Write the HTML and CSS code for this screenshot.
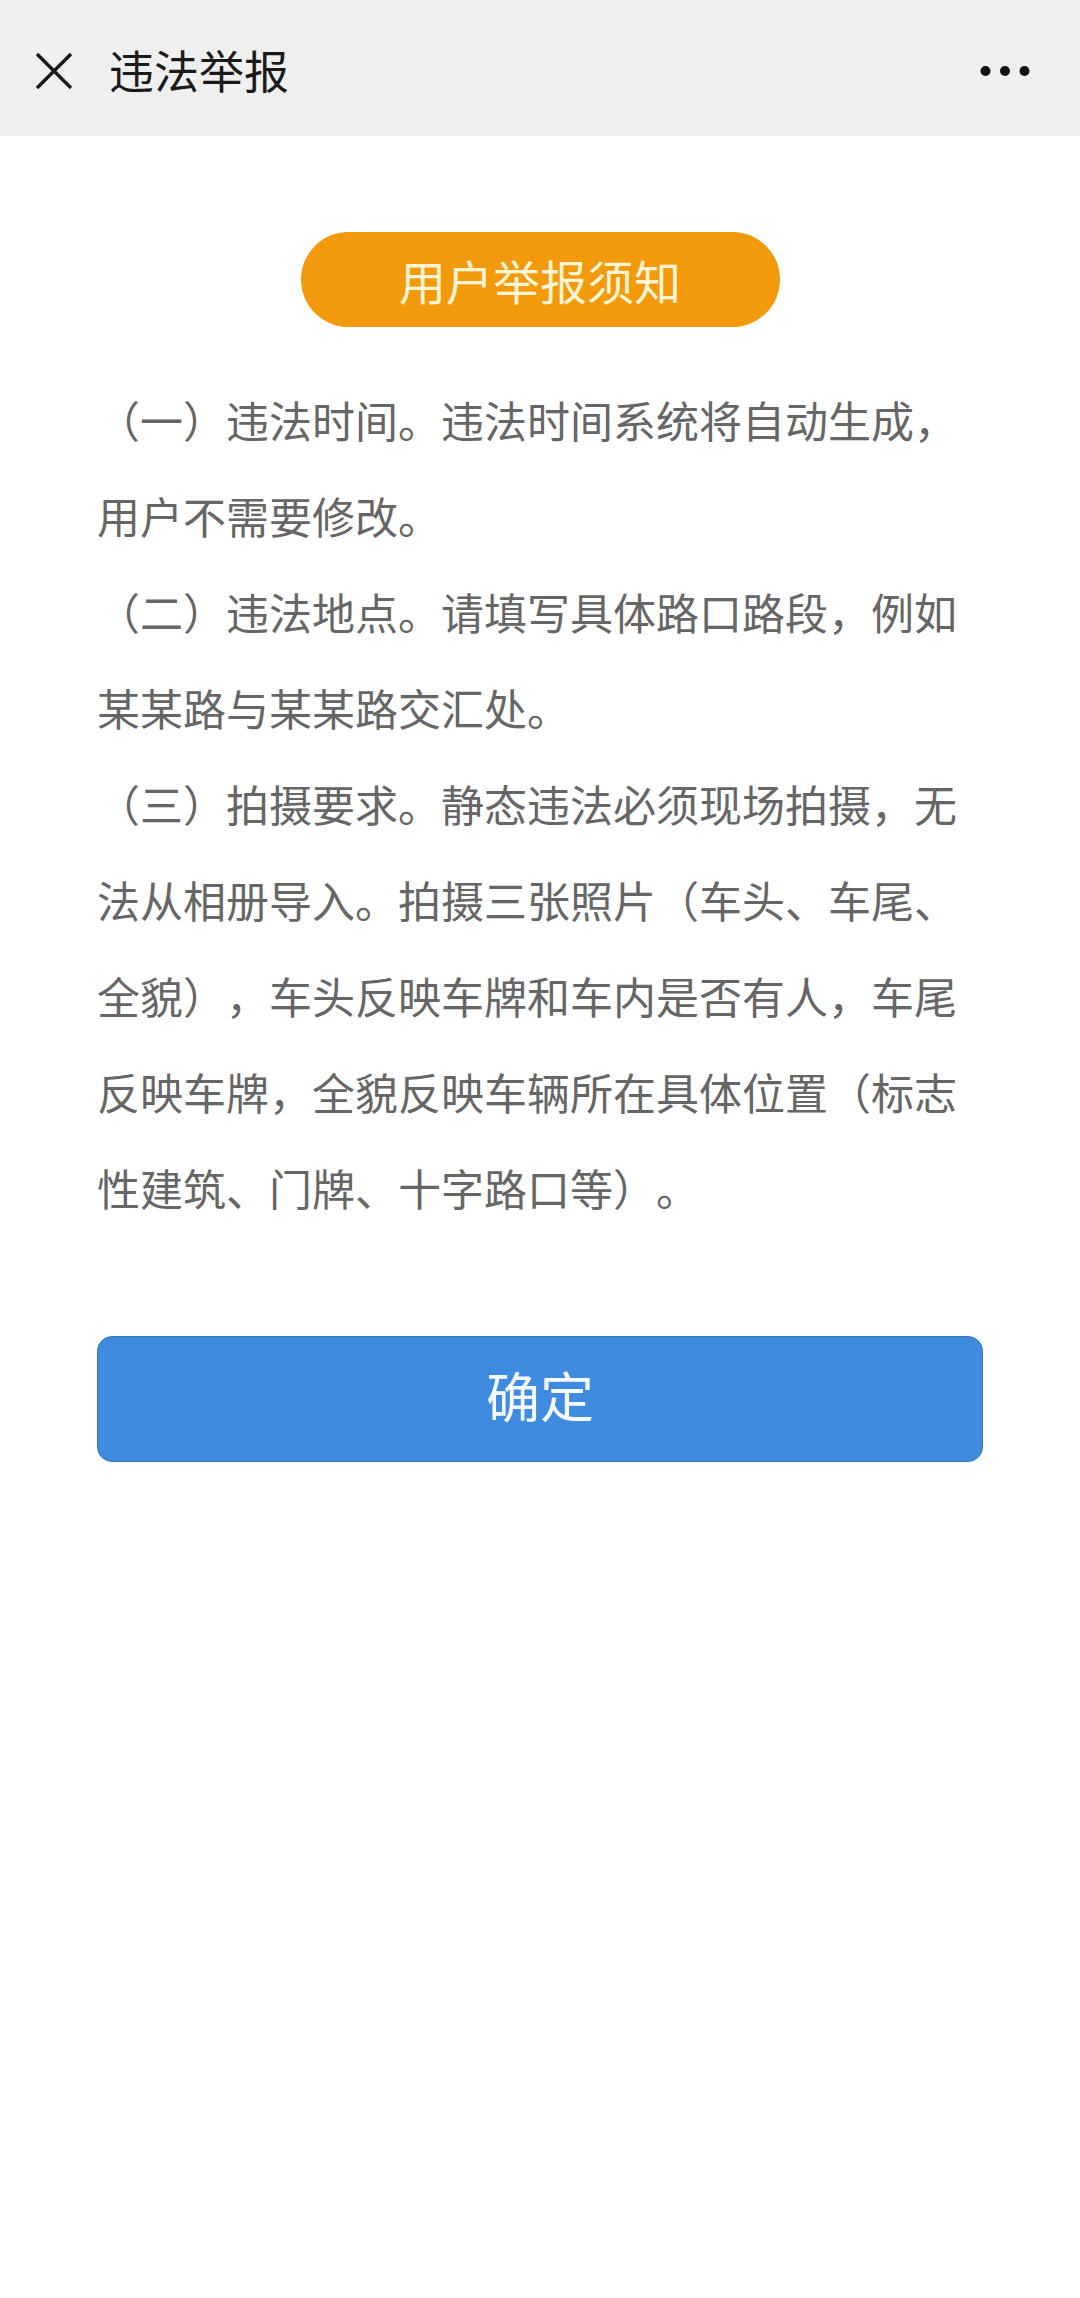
FILE: index.html
```html
<!DOCTYPE html>
<html lang="zh-CN">
<head>
    <meta charset="UTF-8">
    <meta name="viewport" content="width=device-width, initial-scale=1.0">
    <title>违法举报</title>
    <link rel="stylesheet" href="styles.css">
</head>
<body>
    <div class="navbar">
        <svg class="close-icon" width="38" height="38" viewBox="0 0 38 38">
            <path d="M2 2 L36 36 M36 2 L2 36" stroke="#1a1a1a" stroke-width="3.4" fill="none"/>
        </svg>
        <span class="nav-title">违法举报</span>
        <svg class="more-icon" width="50" height="12" viewBox="0 0 50 12">
            <circle cx="5.5" cy="6" r="5"/>
            <circle cx="25" cy="6" r="5"/>
            <circle cx="44.5" cy="6" r="5"/>
        </svg>
    </div>

    <div class="content">
        <div class="notice-title">用户举报须知</div>

        <div class="notice-text">
            <p>（一）违法时间。违法时间系统将自动生成，用户不需要修改。</p>
            <p>（二）违法地点。请填写具体路口路段，例如某某路与某某路交汇处。</p>
            <p>（三）拍摄要求。静态违法必须现场拍摄，无法从相册导入。拍摄三张照片（车头、车尾、全貌），车头反映车牌和车内是否有人，车尾反映车牌，全貌反映车辆所在具体位置（标志性建筑、门牌、十字路口等）。</p>
        </div>

        <button class="confirm-btn">确定</button>
    </div>
</body>
</html>
```

FILE: styles.css
```css
body {
    font-family: "Noto Sans CJK SC", "Noto Sans", sans-serif;
    margin: 0;
    background-color: #fff;
}

.navbar {
    height: 136px;
    box-sizing: border-box;
    background-color: #efefef;
    display: flex;
    align-items: center;
    padding: 6px 50px 0 35px;
}

.close-icon {
    margin-right: 36px;
}

.nav-title {
    font-size: 45px;
    color: #1a1a1a;
    margin-bottom: 4px;
}

.more-icon {
    margin-left: auto;
    fill: #111;
}

.content {
    padding: 96px 97px 0;
    display: flex;
    flex-direction: column;
}

.notice-title {
    align-self: center;
    width: 479px;
    height: 95px;
    border-radius: 48px;
    background-color: #f39a0c;
    color: #fff4d4;
    font-size: 47px;
    display: flex;
    align-items: center;
    justify-content: center;
}

.notice-text {
    margin-top: 44px;
    font-size: 43px;
    line-height: 96px;
    color: #666;
    text-spacing-trim: space-all;
}

.notice-text p {
    margin: 0;
}

.confirm-btn {
    margin-top: 101px;
    height: 126px;
    width: 100%;
    border-radius: 15px;
    background-color: #3e8bdf;
    border: 1.5px solid #3876b5;
    color: #f6faff;
    font-family: inherit;
    font-size: 54px;
    padding: 0 0 10px;
}
```
